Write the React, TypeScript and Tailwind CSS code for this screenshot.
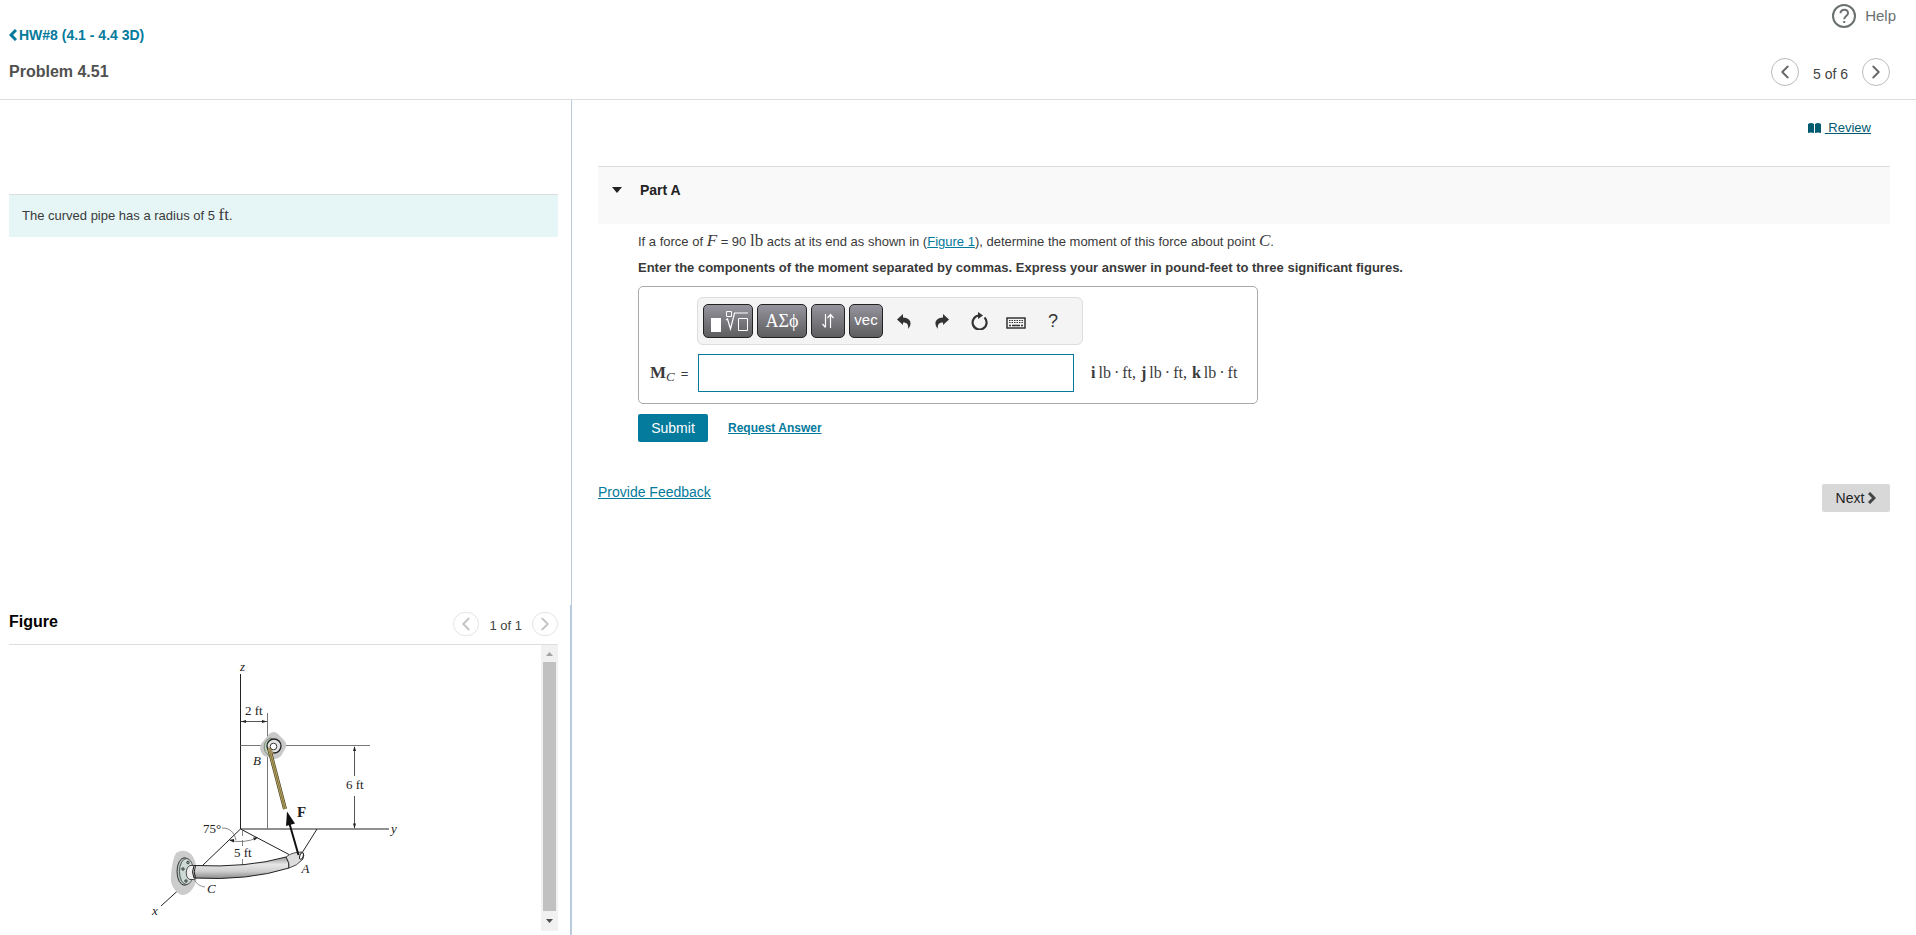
import { ChevronLeft, ChevronRight } from 'lucide-react';
import type { ReactNode } from 'react';

interface PagerProps { label: string; small?: boolean; }

function Pager({ label, small }: PagerProps) {
  const button = small
    ? 'flex h-6 w-[26px] items-center justify-center rounded-full border border-[#e4e4e4] text-[#c4c4c4]'
    : 'flex h-7 w-7 items-center justify-center rounded-full border border-[#bbb] text-[#666]';
  return (
    <div className={small ? 'flex items-center gap-[10px]' : 'flex items-center gap-[14px]'}>
      <button className={button} aria-label="Previous"><ChevronLeft className="h-[22px] w-[22px] shrink-0" /></button>
      <span className={small ? 'pt-1 text-[13px] leading-4 text-[#444]' : 'pt-1 text-sm leading-4 text-[#444]'}>{label}</span>
      <button className={button} aria-label="Next"><ChevronRight className="h-[22px] w-[22px] shrink-0" /></button>
    </div>
  );
}

function Header() {
  return (
    <header className="flex h-[100px] justify-between border-b border-[#ddd] pl-[9px]">
      <div className="pt-[26px]">
        <a href="#" className="flex items-center gap-[2px] text-sm leading-[18px] font-bold text-[#047a9c]">
          <svg viewBox="0 0 8 12" className="h-3 w-2" fill="none" stroke="#047a9c" strokeWidth="3"><path d="M7 1L2 6l5 5" /></svg>
          HW#8 (4.1 - 4.4 3D)
        </a>
        <h1 className="mt-[18px] text-base leading-5 font-bold text-[#505050]">Problem 4.51</h1>
      </div>
      <div className="flex flex-col items-end pt-1">
        <a href="#" className="mr-5 flex items-center gap-[9px] text-[15px] leading-6 text-[#6a7070]">
          <svg viewBox="0 0 24 24" className="h-6 w-6" fill="none" stroke="#6a7070" strokeWidth="2">
            <circle cx="12" cy="12" r="11" />
            <path d="M8.500 9.200C8.500 4.600 16 4.800 16 9.200c0 2.800-3.800 2.800-3.800 6" />
            <path d="M12.200 17v2" />
          </svg>
          Help
        </a>
        <div className="mt-[30px] mr-[26px]"><Pager label="5 of 6" /></div>
      </div>
    </header>
  );
}

function PipeDrawing() {
  return (
    <svg viewBox="0 0 270 280" className="mt-[5px] ml-[131px] h-[280px] w-[270px] shrink-0" fill="none" stroke="#222" fontFamily="Liberation Serif, serif" fontSize="13" role="img" aria-label="Curved pipe from C to A with rope to B">
      <defs>
        <linearGradient id="pipe" x1="0" y1="0" x2="0" y2="1">
          <stop offset="0" stopColor="#999" />
          <stop offset="0.35" stopColor="#e6e6e6" />
          <stop offset="0.65" stopColor="#d0d0d0" />
          <stop offset="1" stopColor="#8a8a8a" />
        </linearGradient>
      </defs>
      {/* axes */}
      <path d="M100.5 24V179H249M100.5 179L62 216M44 235L21 256" />
      <path d="M100.5 179L149 204.5M177 179L162 203" />
      <path d="M100.5 95.5H230M127.5 63V179" stroke="#777" />
      {/* dimensions */}
      <path d="M101 71.5H127M214.5 97V126M214.5 146V178" stroke="#555" />
      <path d="M101 71.5l5-1.5v3zM127 71.5l-5-1.5v3zM214.5 96l-1.5 5h3zM214.5 178.500l-1.5-5h3z" fill="#222" stroke="none" />
      <path d="M90 190.500Q104 193.500 117 188M82 178C90 178 94 182 96 190M102.500 179v7M102.500 190v6M102.500 209v7" stroke="#666" strokeWidth=".8" />
      <path d="M89 190l5-1v3.500zM118 187l-5 .5 1.500 3z" fill="#222" stroke="none" />
      {/* anchor at B */}
      <path d="M129 84q5-4 9 0l5 5q5 5 2 10l-4 7q-5 5-10 2l-7-2q-6-6-3-12z" fill="#c8c8c8" stroke="none" />
      <path d="M131 88c-9 2-9 16 0 18l4-7v-8z" fill="#bcd3bd" stroke="#657565" strokeWidth=".8" />
      <circle cx="134" cy="96" r="7" fill="#e4e4e4" strokeWidth="1.300" />
      <circle cx="133.500" cy="96.500" r="3.300" fill="#fff" strokeWidth=".9" />
      <path d="M129 98L145 159" stroke="#403716" strokeWidth="4" />
      <path d="M129 98L145 159" stroke="#b9a868" strokeWidth="2.800" />
      <path d="M129 98L145 159" stroke="#5d5120" strokeWidth=".6" />
      <path d="M128 97l4 3 2 4-5-1z" fill="#a28d60" stroke="none" />
      {/* wall plate at C */}
      <path d="M36 203q8-5 15 1 5 6 5 14l1 9q-2 10-7 15-8 7-15-2-5-6-4-14 1-16 5-23z" fill="#ccc" stroke="none" />
      <ellipse cx="44.500" cy="221.500" rx="7.500" ry="13.800" fill="#b4c2bf" strokeWidth=".9" />
      <ellipse cx="46.500" cy="221.500" rx="7" ry="13" fill="#cddad6" strokeWidth=".7" />
      <circle cx="48" cy="212.500" r="1.300" fill="#899" strokeWidth=".7" />
      <circle cx="43" cy="219" r="1.300" fill="#899" strokeWidth=".7" />
      <circle cx="46" cy="231" r="1.300" fill="#899" strokeWidth=".7" />
      <path d="M55 215.500h-5c-5 2-5 13 0 14h5z" fill="#eee" strokeWidth=".8" />
      {/* pipe */}
      <path d="M54 215.500Q108 218 146 207Q150 213 149 218Q108 231 54 228Q51 222 54 215.500z" fill="url(#pipe)" />
      <path d="M146 207Q152 202 162 202Q165 205 163 209Q157 216 149 218Q150 213 146 207z" fill="#ddd" strokeWidth=".8" />
      <ellipse cx="161.500" cy="206" rx="1.700" ry="3.300" transform="rotate(20 161.500 206)" fill="#fff" />
      <path d="M55.500 215.500Q53 222 55.500 228" />
      <path d="M54 229Q57 236 65 237" stroke="#777" strokeWidth=".8" />
      {/* force */}
      <path d="M158.500 205L149 172" strokeWidth="2" stroke="#111" />
      <path d="M147 161.500L155 173.500L146 176z" fill="#111" stroke="none" />
      <g fill="#222" stroke="none">
        <g fontStyle="italic">
          <text x="100" y="20.500">z</text>
          <text x="113" y="115">B</text>
          <text x="251" y="183">y</text>
          <text x="161.500" y="223">A</text>
          <text x="67" y="243">C</text>
          <text x="12" y="265">x</text>
        </g>
        <text x="105" y="65">2 ft</text>
        <text x="206" y="139">6 ft</text>
        <text x="63" y="183">75°</text>
        <text x="94" y="207">5 ft</text>
        <text x="157" y="167" fontSize="15" fontWeight="bold">F</text>
      </g>
    </svg>
  );
}

function FigurePanel() {
  return (
    <section className="border-r border-[#b5cbe0] pr-3 pb-1">
      <div className="flex h-10 items-start justify-between border-b border-[#ddd] pt-[7px]">
        <h2 className="text-base leading-5 font-bold text-black">Figure</h2>
        <Pager label="1 of 1" small />
      </div>
      <div className="flex h-[286px] justify-between overflow-hidden">
        <PipeDrawing />
        <div className="flex w-[17px] shrink-0 flex-col items-center bg-[#f1f1f1]">
          <button className="flex h-[17px] w-[17px] items-center justify-center" aria-label="Scroll up">
            <svg viewBox="0 0 7 4" className="h-1 w-[7px]" fill="#a3a3a3"><path d="M0 4L3.500 0L7 4z" /></svg>
          </button>
          <div className="w-[13px] flex-1 bg-[#c1c1c1]" />
          <button className="flex h-5 w-[17px] items-center justify-center" aria-label="Scroll down">
            <svg viewBox="0 0 7 4" className="h-1 w-[7px]" fill="#505050"><path d="M0 0H7L3.500 4z" /></svg>
          </button>
        </div>
      </div>
    </section>
  );
}

function MathText({ children }: { children: ReactNode }) {
  return <span className="font-['Liberation_Serif',serif] text-[17px] leading-4">{children}</span>;
}

function Unit({ axis, last }: { axis: string; last?: boolean }) {
  return (
    <span className="flex items-baseline gap-[3px]">
      <b>{axis}</b>
      <span>lb</span>
      <span>·</span>
      <span>ft{!last && ','}</span>
    </span>
  );
}

function ToolButton({ label, wide, children }: { label: string; wide?: boolean; children: ReactNode }) {
  return (
    <button
      aria-label={label}
      className={wide
        ? 'flex h-[34px] w-[50px] items-center justify-center rounded-[5px] border border-[#222] bg-linear-to-b from-[#96949d] to-[#5e5e60] text-white'
        : 'flex h-[34px] w-[34px] items-center justify-center rounded-[5px] border border-[#222] bg-linear-to-b from-[#96949d] to-[#5e5e60] text-white'}
    >
      {children}
    </button>
  );
}

function Toolbar() {
  return (
    <div className="ml-[58px] flex h-12 w-[386px] items-center gap-1 rounded-md border border-[#ddd] bg-[#f4f4f4] px-[5px]">
      <ToolButton label="Templates" wide>
        <svg viewBox="0 0 40 24" className="h-6 w-10" fill="none" stroke="#fff">
          <path d="M3 9h10v14H3z" fill="#fff" stroke="none" />
          <path d="M18.500 2.500h5v5h-5zM30.500 9.500h9v12h-9z" />
          <path d="M18 11l1.500-1 3 10 4-16H40" strokeWidth="1.200" />
        </svg>
      </ToolButton>
      <ToolButton label="Symbols" wide><span className="font-['Liberation_Serif',serif] text-lg">ΑΣϕ</span></ToolButton>
      <ToolButton label="Subscripts">
        <svg viewBox="0 0 14 16" className="h-4 w-[14px]" fill="none" stroke="#fff" strokeWidth="1.200">
          <path d="M4.500 1V14M1.500 11l3 3.500M9.500 15V2M6.500 5l3-3.500 3 3.500" />
        </svg>
      </ToolButton>
      <ToolButton label="Vectors"><span className="pb-[2px] text-[15px] leading-4">vec</span></ToolButton>
      <div className="flex flex-1 items-center text-[#333]">
        <button className="flex w-[34px] justify-center" aria-label="Undo">
          <svg viewBox="0 0 14 15" className="h-[15px] w-[14px]" fill="#333"><path d="M0 5.500L6 0v3.500c5 0 8 3 7.500 6.500-.2 2-1.200 3.500-2.500 5 .8-3.800-.5-6.500-5-6.500V11z" /></svg>
        </button>
        <button className="flex w-[42px] justify-center" aria-label="Redo">
          <svg viewBox="0 0 14 15" className="h-[15px] w-[14px]" fill="#333"><path d="M14 5.500L8 0v3.500C3 3.500 0 6.500.5 10c.2 2 1.200 3.500 2.500 5-.8-3.800.5-6.500 5-6.500V11z" /></svg>
        </button>
        <button className="flex w-8 justify-center" aria-label="Reset">
          <svg viewBox="0 0 17 18" className="h-[18px] w-[17px]" fill="none" stroke="#333" strokeWidth="2.200">
            <path d="M13.500 5.500A7 7 0 1 1 8.500 3.500" />
            <path d="M7 0v7l5-3.500z" fill="#333" stroke="none" />
          </svg>
        </button>
        <button className="flex w-[42px] justify-center pt-1" aria-label="Keyboard shortcuts">
          <svg viewBox="0 0 20 12" className="h-3 w-5" fill="none" stroke="#333">
            <path d="M1 1h18v10H1z" strokeWidth="1.500" />
            <path d="M3 3.500h14M3 5.500h14" strokeWidth="1.200" strokeDasharray="1.500 1" />
            <path d="M3 8.500h2M6 8.500h8M15 8.500h2" strokeWidth="1.300" />
          </svg>
        </button>
        <button className="flex w-8 justify-center text-lg leading-5" aria-label="Help">?</button>
      </div>
    </div>
  );
}

function AnswerBox() {
  return (
    <div className="h-[118px] w-[620px] rounded-[5px] border border-[#aaa] pt-[10px]">
      <Toolbar />
      <div className="mt-[9px] flex items-center pl-[11px]">
        <label htmlFor="answer" className="flex w-12 items-baseline text-[13px] leading-4">
          <MathText><b>M</b></MathText>
          <sub className="font-['Liberation_Serif',serif] text-[13px] italic">C</sub>
          <span className="ml-[6px]">=</span>
        </label>
        <input id="answer" type="text" className="h-[38px] w-[376px] border border-[#047a9c] bg-white px-2 outline-none" />
        <span className="ml-[17px] flex gap-[5px] font-['Liberation_Serif',serif] text-base leading-4">
          <Unit axis="i" />
          <Unit axis="j" />
          <Unit axis="k" last />
        </span>
      </div>
    </div>
  );
}

export default function App() {
  return (
    <div className="flex min-h-screen flex-col bg-white font-['Liberation_Sans',Arial,sans-serif] text-[#3a3a3a]">
      <Header />
      <main className="grid flex-1 grid-cols-[143fr_336fr]">
        <aside className="flex flex-col justify-between border-r border-[#bccbdb] pl-[9px]">
          <p className="mt-[94px] mr-[13px] border-t border-[#ddd] bg-[#e6f6f6] px-[13px] py-3 text-[13px] leading-[18px]">
            The curved pipe has a radius of 5 <MathText>ft</MathText>.
          </p>
          <FigurePanel />
        </aside>
        <section className="px-[26px]">
          <div className="flex justify-end pt-[19px] pr-[19px]">
            <a href="#" className="flex items-center gap-1 text-[13px] leading-[18px] text-[#005a70]">
              <svg viewBox="0 0 13 10" className="h-[10px] w-[13px]" fill="#005a70"><path d="M0 1q3-2 6 0v9q-3-1-6 0zM7 1q3-2 6 0v9q-3-1-6 0z" /></svg>
              <span className="whitespace-pre underline">{' Review'}</span>
            </a>
          </div>
          <button className="mt-[29px] flex h-[58px] w-full items-start gap-[18px] border-t border-[#ddd] bg-[#f9f9f9] pt-[14px] pl-[14px] text-sm leading-[18px] font-bold text-[#222]">
            <svg viewBox="0 0 10 6" className="mt-[6px] h-[6px] w-[10px]" fill="#222"><path d="M0 0H10L5 6z" /></svg>
            Part A
          </button>
          <div className="pl-10">
            <p className="mt-[9px] text-[13px] leading-[18px]">
              If a force of <MathText><i>F</i></MathText> = 90 <MathText>lb</MathText> acts at its end as shown in (<a href="#" className="text-[#047a9c] underline">Figure 1</a>), determine the moment of this force about point <MathText><i>C</i></MathText>.
            </p>
            <p className="mt-2 mb-[9px] text-[13px] leading-[18px] font-bold">
              Enter the components of the moment separated by commas. Express your answer in pound-feet to three significant figures.
            </p>
            <AnswerBox />
            <div className="mt-[10px] flex items-center gap-5">
              <button className="h-7 w-[70px] rounded-xs bg-[#047a9c] text-sm text-white">Submit</button>
              <a href="#" className="text-xs font-bold text-[#047a9c] underline">Request Answer</a>
            </div>
          </div>
          <div className="mt-[42px] flex items-start justify-between">
            <a href="#" className="text-sm leading-4 text-[#047a9c] underline">Provide Feedback</a>
            <button className="flex h-7 w-[68px] items-center justify-center gap-1 rounded-xs bg-[#d8d8d8] text-sm text-[#222]">
              Next
              <svg viewBox="0 0 8 12" className="h-3 w-2" fill="none" stroke="#444" strokeWidth="3"><path d="M1 1l5 5-5 5" /></svg>
            </button>
          </div>
        </section>
      </main>
    </div>
  );
}
